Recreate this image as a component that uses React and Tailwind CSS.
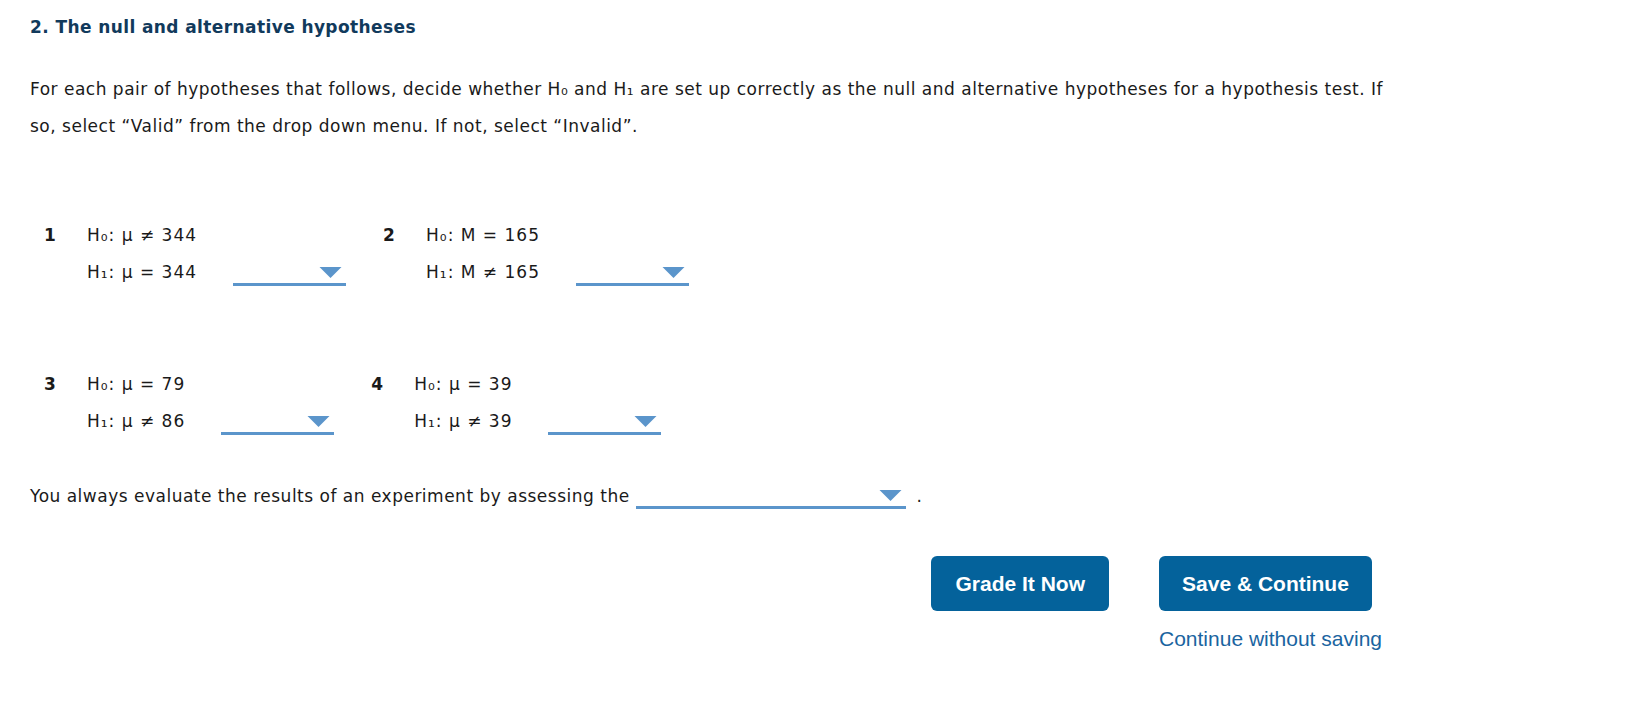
import React from 'react';

function Caret({ className }) {
    return (
        <svg viewBox="0 0 22 11" className={className}>
            <path d="M0 0H22L11 11Z" fill="#5b95cb" />
        </svg>
    );
}

function Pair({ n, h0, h1 }) {
    return (
        <div className="flex">
            <div className="w-[46px] pl-[3px] font-bold leading-[37px]">{n}</div>
            <div className="leading-[37px] whitespace-nowrap tracking-[1px]">
                <div>H₀: {h0}</div>
                <div>H₁: {h1}</div>
            </div>
            <div className="ml-[36px] pt-[37px]">
                <div className="w-[113px] h-[32px] pt-[7px] border-b-[3px] border-[#5b95cb] flex items-center justify-end pr-[4px]">
                    <Caret className="w-[23px] h-[11px]" />
                </div>
            </div>
        </div>
    );
}

export default function App() {
    return (
        <div className="min-h-[720px] bg-white pl-[30px] pt-[17px] text-[17px] tracking-[0.5px] text-[#1a1a1a] font-['DejaVu_Sans',Verdana,sans-serif]">
            <h2 className="text-[17px] leading-[20px] font-bold tracking-[0.4px] text-[#113a5c]">2. The null and alternative hypotheses</h2>

            <p className="mt-[34px] leading-[37px] w-[1375px]">
                For each pair of hypotheses that follows, decide whether H₀ and H₁ are set up correctly as the null and alternative hypotheses for a hypothesis test. If so, select “Valid” from the drop down menu. If not, select “Invalid”.
            </p>

            <div className="mt-[72px] pl-[11px] flex gap-[34px]">
                <Pair n="1" h0="μ ≠ 344" h1="μ = 344" />
                <Pair n="2" h0="M = 165" h1="M ≠ 165" />
            </div>

            <div className="mt-[75px] pl-[11px] flex gap-[34px]">
                <Pair n="3" h0="μ = 79" h1="μ ≠ 86" />
                <Pair n="4" h0="μ = 39" h1="μ ≠ 39" />
            </div>

            <div className="mt-[38px] flex items-start leading-[37px]">
                <span className="whitespace-nowrap">You always evaluate the results of an experiment by assessing the</span>
                <div className="ml-[6px] w-[270px] h-[31px] pt-[6px] border-b-[3px] border-[#5b95cb] flex items-center justify-end pr-[4px]">
                    <Caret className="w-[23px] h-[11px]" />
                </div>
                <span className="ml-[11px]">.</span>
            </div>

            <div className="mt-[41px] flex justify-end pr-[254px] gap-[50px] items-start tracking-normal font-['Liberation_Sans',Arial,sans-serif]">
                <button className="h-[55px] px-[24px] rounded-[6px] bg-[#04629b] text-white text-[21px] font-bold">
                    Grade It Now
                </button>
                <div className="flex flex-col items-start">
                    <button className="h-[55px] px-[23px] rounded-[6px] bg-[#04629b] text-white text-[21px] font-bold">
                        Save &amp; Continue
                    </button>
                    <a className="mt-[16px] text-[21px] leading-[24px] text-[#1a64a0] whitespace-nowrap">Continue without saving</a>
                </div>
            </div>
        </div>
    );
}
